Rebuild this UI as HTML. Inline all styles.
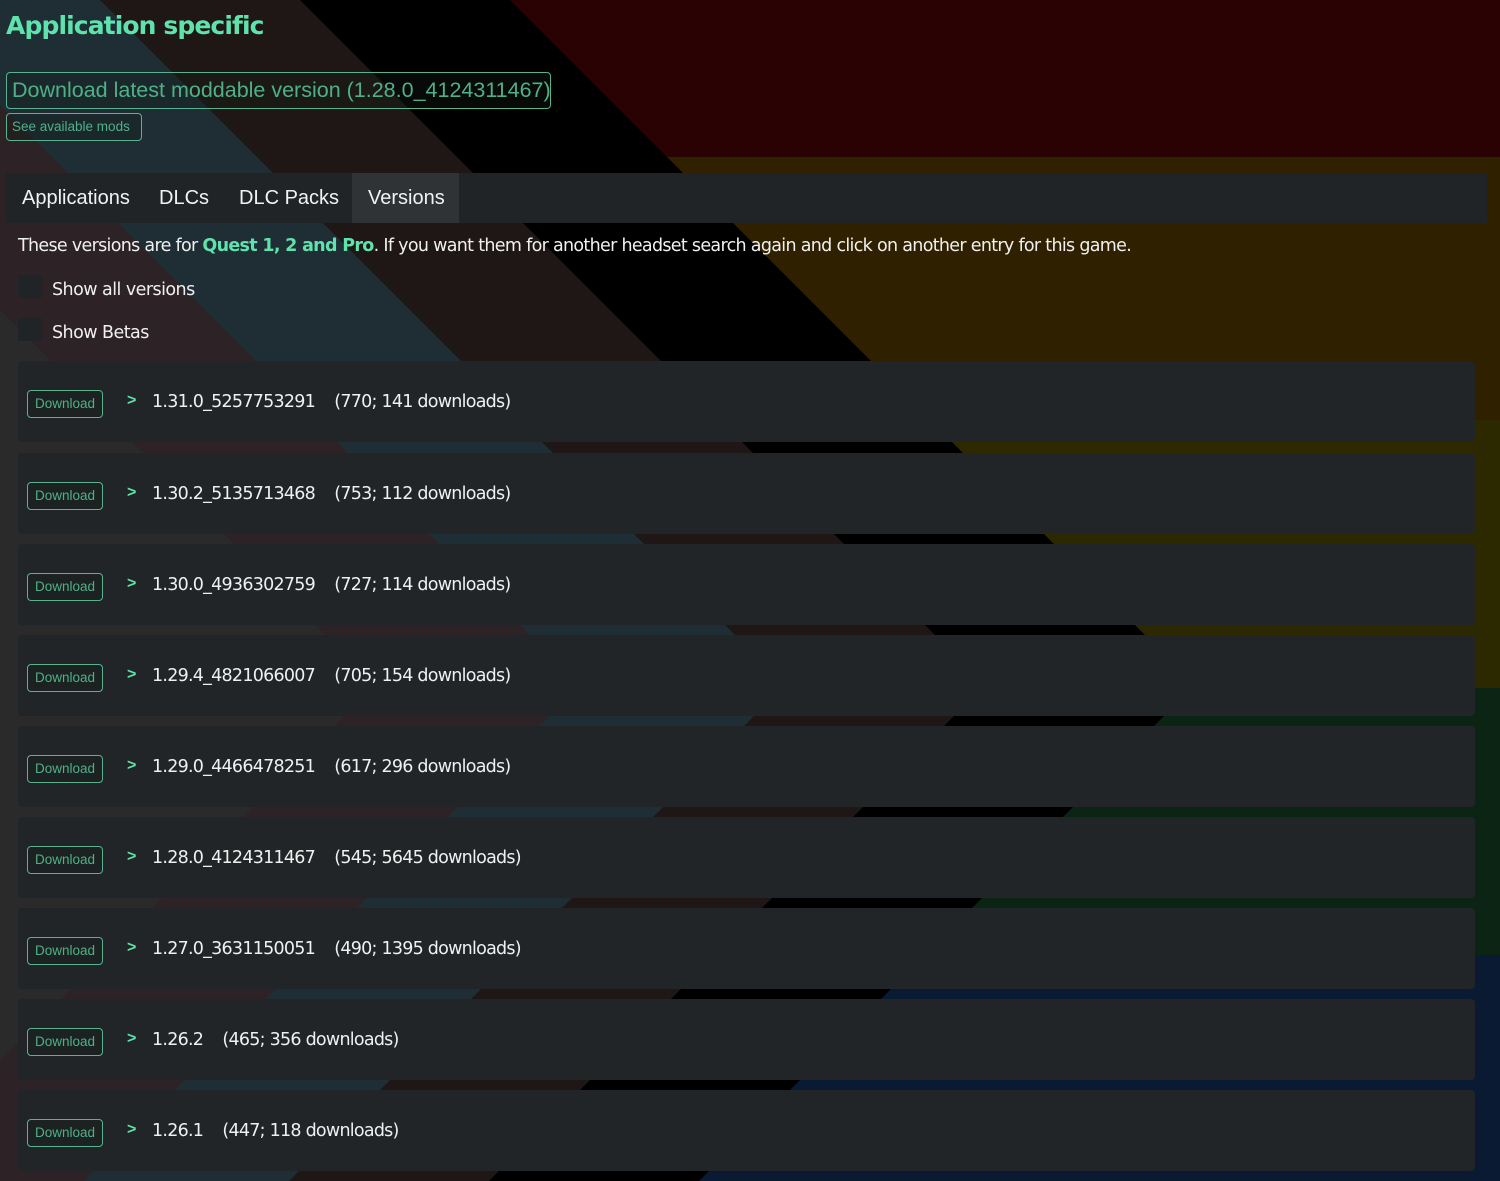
<!DOCTYPE html>
<html><head><meta charset="utf-8">
<style>
*{margin:0;padding:0;box-sizing:border-box}
body{width:1500px;height:1181px;overflow:hidden;position:relative;background:#2a2a2a;font-family:"Liberation Sans",sans-serif;color:#e8e8e8}
svg.bg{position:absolute;left:0;top:0}
h1{position:absolute;left:6px;top:11px;font-size:25px;font-weight:bold;color:#5fe3ac;font-family:"DejaVu Sans","Liberation Sans",sans-serif;letter-spacing:-0.9px}
.btn{position:absolute;border:1px solid #58b38e;border-radius:4px;color:#4fb088;background:rgba(20,28,26,0.35);white-space:nowrap}
.tabs{position:absolute;left:6px;top:173px;width:1481px;height:50px;background:#202426}
.tab{position:absolute;top:0;height:50px;line-height:50px;font-size:20px;color:#f2f2f2}
.tab.act{background:#2f3336}
.note{position:absolute;left:18px;top:236px;font-size:17.5px;font-family:"DejaVu Sans","Liberation Sans",sans-serif;letter-spacing:-0.69px;color:#f0f0f0}
.note b{color:#5fe3ac}
.cb{position:absolute;left:18px;width:24px;height:23px;background:#202426}
.lbl{position:absolute;left:52px;font-size:17.5px;font-family:"DejaVu Sans","Liberation Sans",sans-serif;letter-spacing:-0.55px;color:#f0f0f0}
.row{position:absolute;left:18px;width:1457px;height:81px;background:#212527;border-radius:4px}
.row .btn{left:9px;top:29px;width:76px;height:28px;line-height:26px;font-size:13.5px;text-align:center}
.row .gt{position:absolute;left:109px;top:31px;color:#5fe3ac;font-weight:bold;font-size:16px}
.row .v{position:absolute;left:134px;top:31px;font-size:17.5px;font-family:"DejaVu Sans","Liberation Sans",sans-serif;letter-spacing:-0.75px;color:#f0f0f0;white-space:pre}
</style></head><body>
<svg class="bg" width="1500" height="1181" viewBox="0 0 1500 1181">
<rect x="0" y="0" width="1500" height="157" fill="#2a0204"/>
<rect x="0" y="157" width="1500" height="263" fill="#2f2000"/>
<rect x="0" y="420" width="1500" height="268" fill="#2c2800"/>
<rect x="0" y="688" width="1500" height="267" fill="#0b2414"/>
<rect x="0" y="955" width="1500" height="226" fill="#0a1a33"/>
<polygon points="510,0 1195,685 699,1181 -2000,1181 -2000,0" fill="#000"/>
<polygon points="300,0 985,685 489,1181 -2000,1181 -2000,0" fill="#1e1715"/>
<polygon points="100,0 785,685 289,1181 -2000,1181 -2000,0" fill="#1f2e35"/>
<polygon points="-105,0 580,685 84,1181 -2000,1181 -2000,0" fill="#2d2226"/>
<polygon points="-310,0 375,685 -121,1181 -2000,1181 -2000,0" fill="#2a2a2a"/>
</svg>
<h1>Application specific</h1>
<div class="btn" style="left:6px;top:72px;width:545px;height:37px;line-height:35px;font-size:21.5px;padding-left:5px">Download latest moddable version (1.28.0_4124311467)</div>
<div class="btn" style="left:6px;top:113px;width:136px;height:28px;line-height:26px;font-size:13.5px;padding-left:5px">See available mods</div>
<div class="tabs">
<div class="tab" style="left:16px">Applications</div>
<div class="tab" style="left:153px">DLCs</div>
<div class="tab" style="left:233px">DLC Packs</div>
<div class="tab act" style="left:346px;width:107px;padding-left:16px">Versions</div>
</div>
<div class="note">These versions are for <b>Quest 1, 2 and Pro</b>. If you want them for another headset search again and click on another entry for this game.</div>
<div class="cb" style="top:275px"></div><div class="lbl" style="top:280px">Show all versions</div>
<div class="cb" style="top:318px"></div><div class="lbl" style="top:323px">Show Betas</div>

<div class="row" style="top:361px"><div class="btn">Download</div><div class="gt">&gt;</div><div class="v">1.31.0_5257753291    (770; 141 downloads)</div></div>
<div class="row" style="top:453px"><div class="btn">Download</div><div class="gt">&gt;</div><div class="v">1.30.2_5135713468    (753; 112 downloads)</div></div>
<div class="row" style="top:544px"><div class="btn">Download</div><div class="gt">&gt;</div><div class="v">1.30.0_4936302759    (727; 114 downloads)</div></div>
<div class="row" style="top:635px"><div class="btn">Download</div><div class="gt">&gt;</div><div class="v">1.29.4_4821066007    (705; 154 downloads)</div></div>
<div class="row" style="top:726px"><div class="btn">Download</div><div class="gt">&gt;</div><div class="v">1.29.0_4466478251    (617; 296 downloads)</div></div>
<div class="row" style="top:817px"><div class="btn">Download</div><div class="gt">&gt;</div><div class="v">1.28.0_4124311467    (545; 5645 downloads)</div></div>
<div class="row" style="top:908px"><div class="btn">Download</div><div class="gt">&gt;</div><div class="v">1.27.0_3631150051    (490; 1395 downloads)</div></div>
<div class="row" style="top:999px"><div class="btn">Download</div><div class="gt">&gt;</div><div class="v">1.26.2    (465; 356 downloads)</div></div>
<div class="row" style="top:1090px"><div class="btn">Download</div><div class="gt">&gt;</div><div class="v">1.26.1    (447; 118 downloads)</div></div>
</body></html>
